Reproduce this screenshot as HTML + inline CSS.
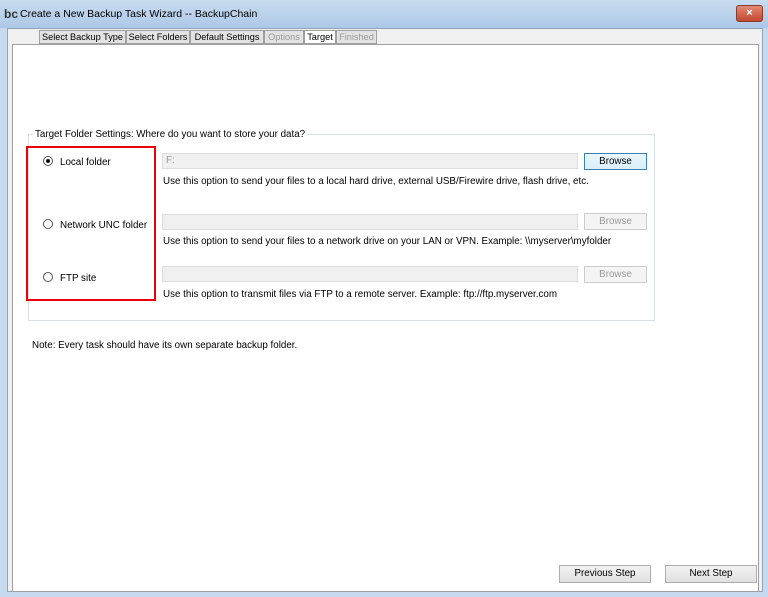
<!DOCTYPE html><html><head><style>
body{margin:0;width:768px;height:597px;overflow:hidden;background:#c6d9ee;font-family:"Liberation Sans",sans-serif;font-size:9.8px;color:#000;position:relative}
.a{position:absolute;white-space:nowrap}
.title{left:0;top:0;width:768px;height:28px;background:linear-gradient(#c9dcf0,#adc8e7)}
.inner{left:7px;top:28px;width:754px;height:562px;background:#f0f0f0;border:1px solid #8ea4bf}
.panel{left:12px;top:44px;width:745px;height:546px;background:#fff;border:1px solid #a0a0a0}
.tab{top:30px;height:12px;border:1px solid #a0a0a0;background:#e3e3e3;line-height:13px;font-size:9.2px;text-align:center;overflow:hidden}
.in{height:16px;background:#f0f0f0;border:1px solid #dcdcdc;box-sizing:border-box;color:#999;padding-left:3px;line-height:14px}
.btn{height:17px;border:1px solid #adadad;background:linear-gradient(#f2f2f2,#e0e0e0);box-sizing:border-box;text-align:center;line-height:16px}
.dis{color:#999;border-color:#ccc;background:#f4f4f4}
.rad{width:10px;height:10px;border:1px solid #555;border-radius:50%;box-sizing:border-box;background:#fff}
</style></head><body>
<div class="a title"></div>
<div class="a" style="left:4px;top:7px;font-weight:bold;font-size:12px;color:#333">bc</div>
<div class="a" style="left:20px;top:8px;font-size:10.5px">Create a New Backup Task Wizard -- BackupChain</div>
<div class="a" style="left:736px;top:5px;width:25px;height:15px;border-radius:3px;background:linear-gradient(#e08a78,#c4472c);border:1px solid #8a3a2a;color:#fff;text-align:center;font-size:11px;font-weight:bold;line-height:15px">×</div>
<div class="a inner"></div>
<div class="a panel"></div>
<div class="a tab" style="left:39px;width:85px">Select Backup Type</div>
<div class="a tab" style="left:126px;width:62px">Select Folders</div>
<div class="a tab" style="left:190px;width:72px">Default Settings</div>
<div class="a tab" style="left:264px;width:38px;color:#999">Options</div>
<div class="a tab" style="left:304px;width:30px;background:#fff">Target</div>
<div class="a tab" style="left:336px;width:39px;color:#999">Finished</div>
<div class="a" style="left:28px;top:134px;width:625px;height:185px;border:1px solid #d5dfe5"></div>
<div class="a" style="left:33px;top:129px;background:#fff;padding:0 2px">Target Folder Settings: Where do you want to store your data?</div>
<div class="a" style="left:26px;top:146px;width:126px;height:151px;border:2px solid #e8000b"></div>
<div class="a rad" style="left:43px;top:156px"></div><div class="a" style="left:46px;top:159px;width:4px;height:4px;border-radius:50%;background:#111"></div>
<div class="a" style="left:60px;top:157px">Local folder</div>
<div class="a rad" style="left:43px;top:219px"></div><div class="a" style="left:60px;top:220px">Network UNC folder</div>
<div class="a rad" style="left:43px;top:272px"></div><div class="a" style="left:60px;top:273px">FTP site</div>
<div class="a in" style="left:162px;top:153px;width:416px">F:</div>
<div class="a in" style="left:162px;top:214px;width:416px"></div>
<div class="a in" style="left:162px;top:266px;width:416px"></div>
<div class="a" style="left:163px;top:176px">Use this option to send your files to a local hard drive, external USB/Firewire drive, flash drive, etc.</div>
<div class="a" style="left:163px;top:236px">Use this option to send your files to a network drive on your LAN or VPN. Example: \\myserver\myfolder</div>
<div class="a" style="left:163px;top:289px">Use this option to transmit files via FTP to a remote server. Example: ftp://ftp.myserver.com</div>
<div class="a btn" style="left:584px;top:153px;width:63px;border-color:#3c7fb1;background:linear-gradient(#eaf6fd,#d9f0fc)">Browse</div>
<div class="a btn dis" style="left:584px;top:213px;width:63px">Browse</div>
<div class="a btn dis" style="left:584px;top:266px;width:63px">Browse</div>
<div class="a" style="left:32px;top:340px">Note: Every task should have its own separate backup folder.</div>
<div class="a btn" style="left:559px;top:565px;width:92px;height:18px">Previous Step</div>
<div class="a btn" style="left:665px;top:565px;width:92px;height:18px">Next Step</div>
</body></html>
